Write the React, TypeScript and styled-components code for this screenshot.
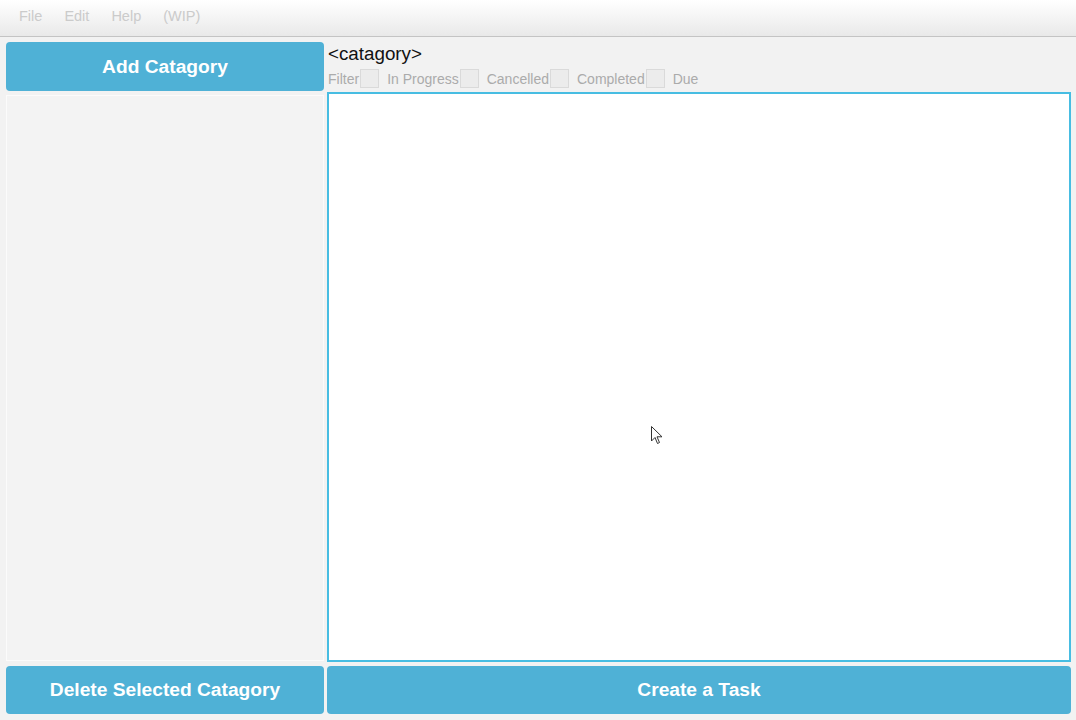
import styled, { createGlobalStyle } from "styled-components";

const GlobalStyle = createGlobalStyle`
  html, body {
    margin: 0;
    padding: 0;
    background: #f2f2f2;
    font-family: "Liberation Sans", Arial, sans-serif;
  }
  #root {
    height: 100vh;
  }
`;

const Window = styled.div`
  position: relative;
  height: 100vh;
  display: flex;
  flex-direction: column;
  background: #f2f2f2;
  overflow: hidden;
`;

const MenuBar = styled.nav`
  height: 36px;
  flex-shrink: 0;
  display: flex;
  align-items: center;
  padding-left: 19px;
  column-gap: 22px;
  background: linear-gradient(#ffffff, #e9e9e9);
  border-bottom: 1px solid #c4c4c4;
`;

const MenuItem = styled.span`
  font-size: 14.5px;
  color: #cbcbcb;
  margin-top: -4px;
`;

const Main = styled.main`
  flex: 1;
  min-height: 0;
  display: flex;
  column-gap: 3px;
  padding: 5px 5px 6px 6px;
`;

const Column = styled.section<{ $width?: number }>`
  display: flex;
  flex-direction: column;
  ${(p) => (p.$width ? `width: ${p.$width}px; flex-shrink: 0;` : "flex: 1;")}
`;

const ActionButton = styled.button<{ $height: number; $gap: number }>`
  height: ${(p) => p.$height}px;
  flex-shrink: 0;
  margin-top: ${(p) => p.$gap}px;
  border: none;
  border-radius: 4px;
  background: #4fb1d6;
  color: white;
  font-family: "Liberation Sans", Arial, sans-serif;
  font-size: 19.2px;
  font-weight: 700;
  cursor: pointer;
`;

const CategoryList = styled.ul`
  flex: 1;
  margin: 4px 0 0 0;
  padding: 0;
  list-style: none;
  background: #f3f3f3;
  border: 1px solid #fbfbfb;
`;

const Header = styled.header`
  height: 50px;
  flex-shrink: 0;
  padding-left: 1px;
`;

const Title = styled.h2`
  margin: 0;
  padding-top: 2px;
  font-size: 18.8px;
  font-weight: 400;
  line-height: 20px;
  color: #111;
`;

const FilterRow = styled.div`
  display: flex;
  align-items: center;
  margin-top: 5px;
  column-gap: 8px;
`;

const FilterItem = styled.label`
  display: flex;
  align-items: center;
  font-size: 14px;
  color: #ababab;
`;

const Box = styled.span`
  width: 19px;
  height: 19px;
  margin-left: 1px;
  box-sizing: border-box;
  background: #ececec;
  border: 1px solid #dadada;
`;

const TaskArea = styled.div`
  flex: 1;
  background: #ffffff;
  border: 2px solid #47bde2;
`;

const Pointer = styled.svg`
  position: absolute;
  left: 651px;
  top: 426px;
`;

const filters = ["Filter", "In Progress", "Cancelled", "Completed"];

export default function App() {
  return (
    <Window>
      <GlobalStyle />
      <MenuBar>
        <MenuItem>File</MenuItem>
        <MenuItem>Edit</MenuItem>
        <MenuItem>Help</MenuItem>
        <MenuItem>(WIP)</MenuItem>
      </MenuBar>
      <Main>
        <Column $width={318}>
          <ActionButton $height={49} $gap={0}>Add Catagory</ActionButton>
          <CategoryList />
          <ActionButton $height={48} $gap={5}>Delete Selected Catagory</ActionButton>
        </Column>
        <Column>
          <Header>
            <Title>&lt;catagory&gt;</Title>
            <FilterRow>
              {filters.map((f) => (
                <FilterItem key={f}>
                  {f}
                  <Box />
                </FilterItem>
              ))}
              <FilterItem>Due</FilterItem>
            </FilterRow>
          </Header>
          <TaskArea />
          <ActionButton $height={48} $gap={4}>Create a Task</ActionButton>
        </Column>
      </Main>
      <Pointer width="13" height="19" viewBox="0 0 13 19">
        <path
          d="M0.5 0.5 L0.5 15 L4 11.5 L6.5 17.5 L8.5 16.5 L6 10.8 L11 10.8 Z"
          fill="#ffffff"
          stroke="#333"
          strokeWidth="1"
          strokeLinejoin="round"
        />
      </Pointer>
    </Window>
  );
}
